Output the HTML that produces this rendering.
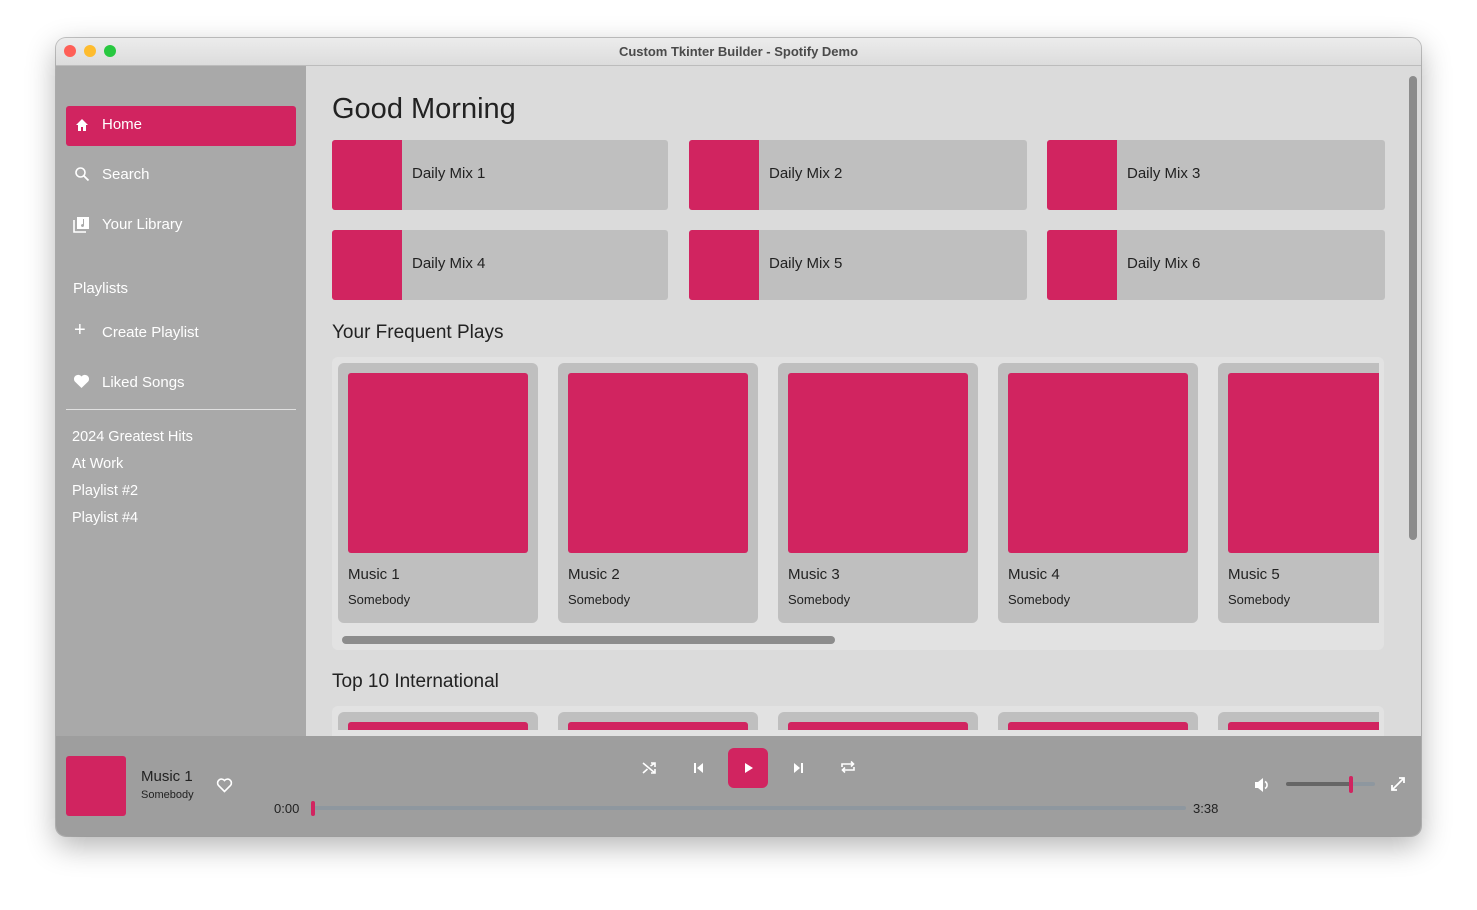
<!DOCTYPE html><html><head><style>
*{margin:0;padding:0;box-sizing:border-box}
body{width:1477px;height:910px;background:#fff;font-family:"Liberation Sans",sans-serif;position:relative;overflow:hidden}
.win{position:absolute;left:56px;top:38px;width:1365px;height:798px;border-radius:10px;overflow:hidden;box-shadow:0 10px 30px rgba(0,0,0,.3),0 0 0 1px #c8c8c8;background:#dbdbdb}
.tb{position:absolute;left:0;top:0;width:100%;height:28px;background:linear-gradient(#ececec,#dcdcdc);border-bottom:1px solid #bcbcbc;text-align:center;font-size:13px;font-weight:bold;color:#4a4a4a;line-height:27px}
.dot{position:absolute;top:7px;width:12px;height:12px;border-radius:50%}
.side{position:absolute;left:0;top:28px;width:250px;height:670px;background:#a9a9a9}
.a{position:absolute;color:#fff;font-size:15px}
.main{position:absolute;left:250px;top:28px;width:1115px;height:670px;background:#dbdbdb;overflow:hidden}
.p{position:absolute;background:#d12460}
.tile{position:absolute;width:336px;height:70px;background:#bfbfbf;border-radius:3px;overflow:hidden}
.tile .p{left:0;top:0;width:70px;height:70px}
.tile span{position:absolute;left:80px;top:25px;font-size:15px;color:#222}
.h{position:absolute;color:#222;font-size:19px}
.cont{position:absolute;left:26px;width:1052px;background:#e2e2e2;border-radius:6px;overflow:hidden}
.card{position:absolute;top:6px;width:200px;height:260px;background:#bfbfbf;border-radius:6px}
.card .p{left:10px;top:10px;width:180px;height:180px;border-radius:3px}
.card b{position:absolute;left:10px;top:203px;font-weight:normal;font-size:15px;color:#222}
.card i{position:absolute;left:10px;top:229px;font-style:normal;font-size:13px;color:#222}
.bot{position:absolute;left:0;top:698px;width:1365px;height:100px;background:#9e9e9e}
</style></head><body>
<div class="win">
<div class="tb">Custom Tkinter Builder - Spotify Demo
<div class="dot" style="left:8px;background:#fe5f57"></div><div class="dot" style="left:28px;background:#febc2e"></div><div class="dot" style="left:48px;background:#28c840"></div></div>
<div class="side">
<div style="position:absolute;left:10px;top:40px;width:230px;height:40px;background:#d12460;border-radius:3px"></div>
<svg style="position:absolute;left:18px;top:51px" width="16" height="16" viewBox="0 0 16 16"><path d="M8 2L2 8h2v6h3v-4h2v4h3V8h2z" fill="#fff"/></svg>
<div class="a" style="left:46px;top:50px">Home</div>
<svg style="position:absolute;left:18px;top:100px" width="16" height="16" viewBox="0 0 16 16"><circle cx="6.5" cy="6.5" r="4.5" stroke="#fff" stroke-width="1.6" fill="none"/><path d="M10 10l4.5 4.5" stroke="#fff" stroke-width="1.8"/></svg>
<div class="a" style="left:46px;top:100px">Search</div>
<svg style="position:absolute;left:17px;top:150px" width="17" height="17" viewBox="0 0 17 17"><rect x="4" y="1" width="12" height="12" fill="#fff"/><path d="M1 4v12h12" stroke="#fff" stroke-width="1.6" fill="none"/><path d="M11 3v6.5a1.5 1.5 0 1 1-1-1.4V3z" fill="#a9a9a9"/></svg>
<div class="a" style="left:46px;top:150px">Your Library</div>
<div class="a" style="left:17px;top:214px">Playlists</div>
<div class="a" style="left:18px;top:253px;font-size:20px">+</div>
<div class="a" style="left:46px;top:258px">Create Playlist</div>
<svg style="position:absolute;left:17px;top:308px" width="17" height="15" viewBox="0 0 17 15"><path d="M8.5 14L1.8 7.5A3.8 3.8 0 0 1 8.5 2.5A3.8 3.8 0 0 1 15.2 7.5Z" fill="#fff"/></svg>
<div class="a" style="left:46px;top:308px">Liked Songs</div>
<div style="position:absolute;left:10px;top:343px;width:230px;height:1px;background:#e0e0e0"></div>
<div class="a" style="left:16px;top:363px;font-size:14.5px">2024 Greatest Hits</div>
<div class="a" style="left:16px;top:390px;font-size:14.5px">At Work</div>
<div class="a" style="left:16px;top:417px;font-size:14.5px">Playlist #2</div>
<div class="a" style="left:16px;top:444px;font-size:14.5px">Playlist #4</div>
</div>
<div class="main">
<div class="h" style="left:26px;top:27px;font-size:29px">Good Morning</div>
<div class="tile" style="left:26px;top:74px"><div class="p"></div><span>Daily Mix 1</span></div>
<div class="tile" style="left:383px;top:74px;width:338px"><div class="p"></div><span>Daily Mix 2</span></div>
<div class="tile" style="left:741px;top:74px;width:338px"><div class="p"></div><span>Daily Mix 3</span></div>
<div class="tile" style="left:26px;top:164px"><div class="p"></div><span>Daily Mix 4</span></div>
<div class="tile" style="left:383px;top:164px;width:338px"><div class="p"></div><span>Daily Mix 5</span></div>
<div class="tile" style="left:741px;top:164px;width:338px"><div class="p"></div><span>Daily Mix 6</span></div>
<div class="h" style="left:26px;top:256px">Your Frequent Plays</div>
<div class="cont" style="top:291px;height:293px">
<div style="position:absolute;left:6px;top:0;width:1041px;height:280px;overflow:hidden">
<div class="card" style="left:0"><div class="p"></div><b>Music 1</b><i>Somebody</i></div>
<div class="card" style="left:220px"><div class="p"></div><b>Music 2</b><i>Somebody</i></div>
<div class="card" style="left:440px"><div class="p"></div><b>Music 3</b><i>Somebody</i></div>
<div class="card" style="left:660px"><div class="p"></div><b>Music 4</b><i>Somebody</i></div>
<div class="card" style="left:880px"><div class="p"></div><b>Music 5</b><i>Somebody</i></div>
</div>
<div style="position:absolute;left:10px;top:279px;width:493px;height:8px;border-radius:4px;background:#8c8c8c"></div>
</div>
<div class="h" style="left:26px;top:605px">Top 10 International</div>
<div class="cont" style="top:640px;height:100px">
<div style="position:absolute;left:6px;top:0;width:1041px;height:24px;overflow:hidden">
<div class="card" style="left:0"><div class="p"></div></div>
<div class="card" style="left:220px"><div class="p"></div></div>
<div class="card" style="left:440px"><div class="p"></div></div>
<div class="card" style="left:660px"><div class="p"></div></div>
<div class="card" style="left:880px"><div class="p"></div></div>
</div></div>
<div style="position:absolute;left:1103px;top:10px;width:8px;height:464px;border-radius:4px;background:#8c8c8c"></div>
</div>
<div class="bot">
<div class="p" style="left:10px;top:20px;width:60px;height:60px;border-radius:3px"></div>
<div style="position:absolute;left:85px;top:32px;font-size:15px;color:#222">Music 1</div>
<div style="position:absolute;left:85px;top:53px;font-size:11px;color:#222">Somebody</div>
<svg style="position:absolute;left:160px;top:41px" width="17" height="16" viewBox="0 0 17 16"><path d="M8.5 14.5L2.5 8.5A3.3 3.3 0 0 1 8.5 3.5A3.3 3.3 0 0 1 14.5 8.5Z" stroke="#fff" stroke-width="1.6" fill="none"/></svg>
<svg style="position:absolute;left:585px;top:24px" width="16" height="16" viewBox="0 0 16 16" stroke="#fff" stroke-width="1.6" fill="none"><path d="M2 3l12 10M10 13h4v-4M2 13l4.5-4M9.5 6L14 3M10 3h4v4"/></svg>
<svg style="position:absolute;left:636px;top:25px" width="14" height="14" viewBox="0 0 14 14" fill="#fff"><rect x="2" y="2" width="2" height="10"/><path d="M11 2v10L5 7z"/></svg>
<div class="p" style="left:672px;top:12px;width:40px;height:40px;border-radius:6px"></div>
<svg style="position:absolute;left:686px;top:25px" width="14" height="14" viewBox="0 0 14 14" fill="#fff"><path d="M3 2v10l8-5z"/></svg>
<svg style="position:absolute;left:735px;top:25px" width="14" height="14" viewBox="0 0 14 14" fill="#fff"><rect x="10" y="2" width="2" height="10"/><path d="M3 2v10l6-5z"/></svg>
<svg style="position:absolute;left:784px;top:23px" width="16" height="16" viewBox="0 0 16 16" stroke="#fff" stroke-width="1.6" fill="none"><path d="M2 8V5h11M11 2.5l2.5 2.5-2.5 2.5M14 8v3H3M5 13.5L2.5 11 5 8.5"/></svg>
<div style="position:absolute;left:218px;top:65px;font-size:13px;color:#222">0:00</div>
<div style="position:absolute;left:258px;top:70px;width:872px;height:4px;background:#8e979f;border-radius:2px"></div>
<div class="p" style="left:255px;top:65px;width:4px;height:15px;border-radius:2px"></div>
<div style="position:absolute;left:1137px;top:65px;font-size:13px;color:#222">3:38</div>
<svg style="position:absolute;left:1197px;top:40px" width="18" height="18" viewBox="0 0 18 18" fill="#fff"><path d="M2 6h3l5-4v14l-5-4H2z"/><path d="M12 5.5a4 4 0 0 1 0 7" stroke="#fff" stroke-width="1.6" fill="none"/></svg>
<div style="position:absolute;left:1230px;top:46px;width:65px;height:4px;background:#666;border-radius:2px"></div>
<div style="position:absolute;left:1295px;top:46px;width:24px;height:4px;background:#8e979f;border-radius:2px"></div>
<div class="p" style="left:1293px;top:40px;width:4px;height:17px;border-radius:2px"></div>
<svg style="position:absolute;left:1334px;top:40px" width="16" height="16" viewBox="0 0 16 16" stroke="#fff" stroke-width="1.8" fill="none"><path d="M2 14L14 2M9 2h5v5M2 9v5h5"/></svg>
</div>
</div>
</body></html>
